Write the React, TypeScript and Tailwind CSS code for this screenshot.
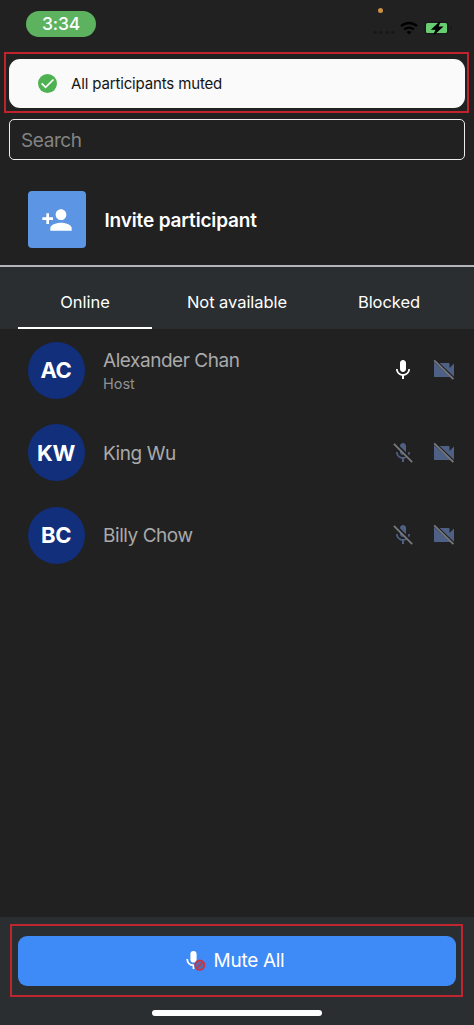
import { MdMic, MdPersonAdd } from "react-icons/md";

type Participant = {
    initials: string;
    name: string;
    role?: string;
    micOn: boolean;
};

const tabs = ["Online", "Not available", "Blocked"];

const participants: Participant[] = [
    { initials: "AC", name: "Alexander Chan", role: "Host", micOn: true },
    { initials: "KW", name: "King Wu", micOn: false },
    { initials: "BC", name: "Billy Chow", micOn: false },
];

function CheckIcon() {
    return (
        <svg viewBox="0 0 20 20" className="h-[19px] w-[19px]" fill="none">
            <circle cx="10" cy="10" r="10" fill="#4eb252" />
            <path d="m3.8 9.9 4.2 4.2 8.3-8.3" stroke="white" strokeWidth="1.8" />
        </svg>
    );
}

function WifiIcon() {
    return (
        <svg viewBox="0 0 18 14" className="h-[14px] w-[18px]" fill="none" stroke="black" strokeWidth="2.3">
            <path d="M1 5.2a11.6 11.6 0 0 1 16 0" />
            <path d="M4.2 8.5a7 7 0 0 1 9.6 0" />
            <path d="M9 13.6 6.6 11.1a3.6 3.6 0 0 1 4.8 0Z" fill="black" stroke="none" />
        </svg>
    );
}

function BatteryIcon() {
    return (
        <svg viewBox="0 0 30 14" className="h-[14px] w-[30px]">
            <rect x="0.5" y="0.5" width="24.5" height="13" rx="3.5" fill="#1a1c1b" />
            <rect x="2" y="2" width="21" height="10" rx="1.5" fill="#68ce72" />
            <path d="M26.7 4.8v4.4c1.6-.7 1.6-3.7 0-4.4Z" fill="#171717" />
            <path d="M16 1 8.3 8.2h4.2L10 13.2l8-7.2h-4.3Z" fill="black" stroke="black" strokeWidth="1.2" />
        </svg>
    );
}

function MicOffIcon() {
    return (
        <svg viewBox="0 0 24 24" className="h-6 w-6" fill="#4f6084">
            <path d="M19 11h-1.7c0 .74-.16 1.43-.43 2.05l1.23 1.23c.56-.98.9-2.09.9-3.28zM14.98 11.17c0-.06.02-.11.02-.17V5c0-1.66-1.34-3-3-3S9 3.34 9 5v.18zM9 9.1V11c0 1.66 1.33 3 2.99 3 .22 0 .44-.03.65-.08zM6.7 11H5c0 3.41 2.72 6.23 6 6.72V21h2v-3.28c.91-.13 1.77-.45 2.54-.9l-1.25-1.25c-.7.34-1.49.53-2.29.53-2.76 0-5.3-2.1-5.3-5.1z" />
            <path d="M2.9 2.9 21.2 21.2" stroke="#77797e" strokeWidth="1.8" />
        </svg>
    );
}

function VideoOffIcon() {
    return (
        <svg viewBox="0 0 24 24" className="h-6 w-6" fill="#4e6086">
            <path d="M22 5.5 17.5 10V6c0-.6-.4-1-1-1H7.6L22 18.8ZM2 4v14c0 .6.4 1 1 1h15.4Z" />
            <path d="M2.2 2.4 21.4 21.2" stroke="#77797e" strokeWidth="1.8" />
        </svg>
    );
}

function MuteAllIcon() {
    return (
        <svg viewBox="0 0 20 22" className="h-[22px] w-5" fill="none">
            <rect x="4.4" y="1" width="6.2" height="11.5" rx="3.1" fill="white" />
            <path d="M1.2 9c0 3.8 2.8 6.2 6.2 6.2M7.5 14.8V19" stroke="white" strokeWidth="1.8" />
            <circle cx="13.8" cy="15.2" r="4.7" fill="#566cae" stroke="#cc3348" strokeWidth="1.8" />
            <path d="m10.5 18.5 6.6-6.6" stroke="#cc3348" strokeWidth="1.6" />
        </svg>
    );
}

function StatusBar() {
    return (
        <div className="flex h-[52px] items-start justify-between pl-[26px] pr-[20px]">
            <div className="mt-[11px] flex h-[26px] w-[70px] items-center justify-center rounded-full bg-[#5cb25f] text-[17.5px] font-medium tracking-[-0.2px] text-white">
                3:34
            </div>
            <div className="flex flex-col">
                <span className="ml-[5px] mt-[8px] h-[5px] w-[5px] rounded-full bg-[#cd9043]" />
                <div className="mt-[8px] flex items-center">
                    <div className="mr-[5px] mt-[9px] flex gap-[2px]">
                        {[0, 1, 2, 3].map((dot) => (
                            <span key={dot} className="h-[3px] w-[4px] rounded-full bg-[#191919]" />
                        ))}
                    </div>
                    <WifiIcon />
                    <div className="ml-[6px]">
                        <BatteryIcon />
                    </div>
                </div>
            </div>
        </div>
    );
}

function ParticipantRow({ participant }: { participant: Participant }) {
    return (
        <li className="flex h-[82.5px] items-center pl-[27.5px] pr-[18px]">
            <div className="flex h-[57px] w-[57px] items-center justify-center rounded-full bg-[#122f7c] pt-px text-[22px] font-bold tracking-[-0.3px] text-white">
                {participant.initials}
            </div>
            <div className="ml-[18.5px] flex-1 whitespace-nowrap pt-[2px] text-[#a9a9ab]">
                <p className="text-[19px] leading-6 tracking-[-0.45px]">{participant.name}</p>
                {participant.role && <p className="text-[14.5px] leading-[21px] text-[#929294]">{participant.role}</p>}
            </div>
            <div className="flex gap-[17px]">
                {participant.micOn ? <MdMic className="h-6 w-6 text-white" /> : <MicOffIcon />}
                <VideoOffIcon />
            </div>
        </li>
    );
}

export default function App() {
    return (
        <main className="flex h-[1025px] w-[474px] flex-col overflow-hidden bg-[#212121] font-['Inter',sans-serif] text-white">
            <StatusBar />

            <div className="ml-[4px] h-[61px] w-[465px] border-2 border-[#c0222e] py-[5px] pl-[3px] pr-[2px]">
                <div className="flex h-[49px] items-center rounded-[11px] bg-[#fafafa] pl-[29px] text-[15px] tracking-[-0.15px] text-[#141414]">
                    <CheckIcon />
                    <span className="ml-[14px] pt-px">All participants muted</span>
                </div>
            </div>

            <div className="mx-[9px] mt-[6px]">
                <input
                    type="text"
                    placeholder="Search"
                    className="block h-[41px] w-full rounded-[5px] border-[1.5px] border-[#ececec] bg-transparent px-[11px] pt-[2px] text-[19px] tracking-[-0.4px] outline-none placeholder:text-[#838383]"
                />
            </div>

            <button type="button" className="mt-[31px] flex items-center pl-[28px]">
                <span className="flex h-[57px] w-[58px] items-center justify-center rounded-[4px] bg-[#5b95e4]">
                    <MdPersonAdd className="h-8 w-8" />
                </span>
                <span className="ml-[18.5px] pt-[3px] text-[19px] font-semibold tracking-[-0.15px]">Invite participant</span>
            </button>

            <nav className="mt-[17px] flex h-[64px] shrink-0 gap-[18px] border-t-2 border-[#b3b5b9] bg-[#2a2e31] px-[18px]">
                {tabs.map((tab, index) => (
                    <button
                        key={tab}
                        type="button"
                        className={`w-[134px] whitespace-nowrap border-b-2 pt-[11px] text-[16.5px] tracking-[-0.05px] ${index === 0 ? "border-white" : "border-transparent"}`}
                    >
                        {tab}
                    </button>
                ))}
            </nav>

            <ul className="flex-1">
                {participants.map((participant) => (
                    <ParticipantRow key={participant.initials} participant={participant} />
                ))}
            </ul>

            <footer className="h-[108px] shrink-0 bg-[#2a2e31] pl-[10px] pt-[7px]">
                <div className="h-[73px] w-[453px] border-2 border-[#c0262f] py-[10px] pl-[6px] pr-[5px]">
                    <button
                        type="button"
                        className="flex h-[50px] w-full items-center justify-center rounded-[9px] bg-[#3e8af6] pr-[4px] text-[19px] tracking-[-0.3px]"
                    >
                        <MuteAllIcon />
                        <span className="ml-[8px] pt-px">Mute All</span>
                    </button>
                </div>
                <div className="ml-[142px] mt-[13px] h-[6px] w-[170px] rounded-full bg-white" />
            </footer>
        </main>
    );
}
